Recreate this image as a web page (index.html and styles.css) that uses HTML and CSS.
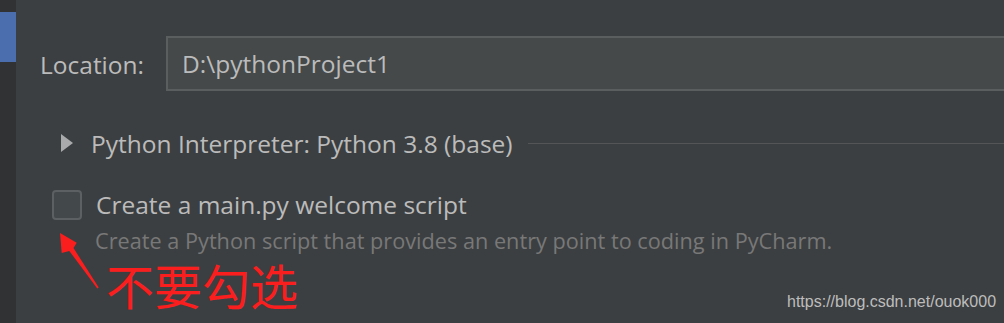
FILE: index.html
```html
<!DOCTYPE html>
<html>
<head>
<meta charset="utf-8">
<link rel="stylesheet" href="styles.css">
</head>
<body>
<div class="app">
  <div class="sidebar"><div class="sel"></div></div>
  <div class="main">
    <div class="row loc">
      <span class="label">Location:</span>
      <div class="field">D:\pythonProject1</div>
    </div>
    <div class="row interp">
      <span class="tri"></span>
      <span class="interp-text">Python Interpreter: Python 3.8 (base)</span>
      <span class="sep"></span>
    </div>
    <div class="row check">
      <span class="box"></span>
      <span class="check-text">Create a main.py welcome script</span>
    </div>
    <div class="desc">Create a Python script that provides an entry point to coding in PyCharm.</div>
  </div>
  <svg class="arrow" width="62" height="62" viewBox="0 0 62 62">
    <polygon points="20,3 36.7,12.7 33.5,18.1 58.7,57.5 57.3,58.5 29.3,20.9 21.7,23" fill="#fa1e1e"/>
  </svg>
  <div class="note">不要勾选</div>
  <div class="mark">https://blog.csdn.net/ouok000</div>
</div>
</body>
</html>
```
FILE: styles.css
```css
html, body {
  margin: 0;
  padding: 0;
  background: #3c3f41;
}
.app {
  position: relative;
  width: 1004px;
  height: 323px;
  overflow: hidden;
  display: flex;
  background: #3c3f41;
  font-family: "Open Sans", "Noto Sans", sans-serif;
}
.sidebar {
  width: 16px;
  flex: none;
  background: #303234;
  padding-top: 12px;
  box-sizing: border-box;
}
.sel {
  height: 50px;
  background: #4b6eaf;
}
.main {
  flex: 1;
  min-width: 0;
  padding-left: 24px;
  display: flex;
  flex-direction: column;
}
.row {
  display: flex;
  align-items: center;
}
.loc {
  margin-top: 36px;
  height: 55px;
}
.label {
  width: 126px;
  flex: none;
  color: #bbbbbb;
  font-size: 24.5px;
  padding-top: 1px;
}
.field {
  flex: 1;
  height: 55px;
  margin-right: -40px;
  box-sizing: border-box;
  border: 2px solid #5b5e5f;
  background: #45494a;
  color: #bbbbbb;
  font-size: 24.5px;
  padding-left: 14px;
  display: flex;
  align-items: center;
}
.interp {
  margin-top: 34px;
  height: 36px;
}
.tri {
  flex: none;
  width: 0;
  height: 0;
  margin-left: 21px;
  border-top: 9.5px solid transparent;
  border-bottom: 9.5px solid transparent;
  border-left: 12px solid #a8aaac;
}
.interp-text {
  margin-left: 18px;
  color: #bbbbbb;
  font-size: 24.5px;
  white-space: nowrap;
}
.sep {
  flex: 1;
  height: 1px;
  background: #535557;
  margin-left: 15px;
  margin-right: -40px;
}
.check {
  margin-top: 29px;
  height: 30px;
}
.box {
  flex: none;
  width: 30px;
  height: 30px;
  margin-left: 12px;
  box-sizing: border-box;
  border: 2px solid #5d6062;
  border-radius: 4px;
  background: #43484a;
}
.check-text {
  margin-left: 14px;
  color: #bbbbbb;
  font-size: 24.5px;
  white-space: nowrap;
  margin-top: -2px;
}
.desc {
  margin-top: 6px;
  margin-left: 55px;
  color: #787878;
  font-size: 21.7px;
  white-space: nowrap;
}
.arrow {
  position: absolute;
  left: 40px;
  top: 230px;
}
.note {
  position: absolute;
  left: 106px;
  top: 259px;
  color: #fa1e1e;
  font-family: "Noto Sans CJK SC", sans-serif;
  font-size: 48px;
  line-height: 50px;
}
.mark {
  position: absolute;
  left: 787px;
  top: 292px;
  color: #bdbdbd;
  font-family: "Liberation Sans", Arial, sans-serif;
  font-size: 16px;
  line-height: 20px;
}
```
